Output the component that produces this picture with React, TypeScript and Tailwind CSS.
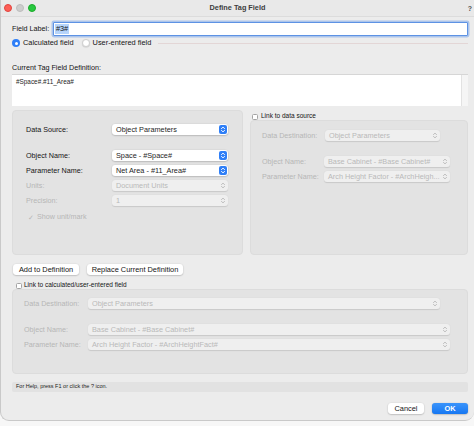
import React from 'react';

const Stepper = ({ disabled }: { disabled?: boolean }) =>
  disabled ? (
    <svg width="8" height="9" viewBox="0 0 8 9" className="shrink-0">
      <path d="M2.5 3.6 L4 2.1 L5.5 3.6 M2.5 5.4 L4 6.9 L5.5 5.4" fill="none" stroke="#b4b4b4" strokeWidth="0.9" strokeLinecap="round" strokeLinejoin="round" />
    </svg>
  ) : (
    <svg width="8" height="9" viewBox="0 0 8 9" className="shrink-0">
      <rect x="0" y="0" width="8" height="9" rx="2" fill="#2f7ff7" />
      <path d="M2.5 3.6 L4 2.1 L5.5 3.6 M2.5 5.4 L4 6.9 L5.5 5.4" fill="none" stroke="#fff" strokeWidth="1" strokeLinecap="round" strokeLinejoin="round" />
    </svg>
  );

const Popup = ({ text, width, disabled }: { text: string; width: string; disabled?: boolean }) => (
  <div
    className={`flex items-center justify-between h-[11px] rounded-[3px] pl-[4px] pr-[1px] text-[7.3px] leading-none whitespace-nowrap overflow-hidden ${width} ${
      disabled
        ? 'bg-[#efefef] text-[#b9b9b9] shadow-[0_0.5px_1px_rgba(0,0,0,0.12)]'
        : 'bg-white text-[#1e1e1e] shadow-[0_0.5px_1.5px_rgba(0,0,0,0.3)]'
    }`}
  >
    <span>{text}</span>
    <Stepper disabled={disabled} />
  </div>
);

const Row = ({ label, labelW, children, disabled, className = '' }: { label: string; labelW: string; children: React.ReactNode; disabled?: boolean; className?: string }) => (
  <div className={`flex items-center h-[11px] ${className}`}>
    <span className={`${labelW} shrink-0 whitespace-nowrap text-[7.2px] leading-none ${disabled ? 'text-[#b6b6b6]' : 'text-[#141414]'}`}>{label}</span>
    {children}
  </div>
);

const Checkbox = () => (
  <span className="w-[6px] h-[6px] shrink-0 rounded-[1.5px] bg-white border border-[#a4a4a4]" />
);

const Button = ({ text, width }: { text: string; width: string }) => (
  <div className={`h-[11px] ${width} flex items-center justify-center whitespace-nowrap rounded-[3px] bg-white text-[7.4px] leading-none text-[#141414] shadow-[0_0.5px_1.5px_rgba(0,0,0,0.3)]`}>
    {text}
  </div>
);

export default function App() {
  return (
    <div className="w-[474px] h-[426px] bg-[#f7f7f7] overflow-hidden font-['Liberation_Sans',Arial,sans-serif]">
      <div className="h-[421px] bg-[#ececec] border-l border-b border-[#c9c9c9] rounded-b-[9px] flex flex-col">
        {/* title bar */}
        <div className="grid grid-cols-[1fr_auto_1fr] items-center h-[17px] border-b border-[#dcdcdc] bg-[#e9e9e9]">
          <div className="flex items-center gap-[4px] pl-[3px]">
            <span className="w-[8px] h-[8px] rounded-full bg-[#fe5f57] border-[0.5px] border-[#e0443e]" />
            <span className="w-[8px] h-[8px] rounded-full bg-[#cdcdcd] border-[0.5px] border-[#bdbdbd]" />
            <span className="w-[8px] h-[8px] rounded-full bg-[#28c840] border-[0.5px] border-[#1aab29]" />
          </div>
          <span className="text-[7.3px] font-bold text-[#3d3d3d] leading-none">Define Tag Field</span>
          <span className="justify-self-end pr-[2px] text-[7px] font-bold text-[#555] leading-none">?</span>
        </div>

        <div className="flex flex-col pl-[11px] pr-[6px]">
          {/* field label */}
          <div className="flex items-center gap-[2px] h-[14px] mt-[5px]">
            <span className="w-[39px] shrink-0 whitespace-nowrap text-[7.2px] leading-none text-[#141414]">Field Label:</span>
            <div className="flex-1 h-[14px] flex items-center bg-white border border-[#5d92e4] rounded-[1px] shadow-[0_0_0_1.5px_rgba(120,165,235,0.55)]">
              <span className="ml-[1px] px-[1px] bg-[#b6d4fb] text-[7.3px] leading-[10px] text-[#141414]">#3#</span>
            </div>
          </div>

          {/* radios */}
          <div className="flex items-center h-[10px] mt-[2px] whitespace-nowrap">
            <span className="w-[8px] h-[8px] rounded-full bg-[#2f7ff7] flex items-center justify-center">
              <span className="w-[3px] h-[3px] rounded-full bg-white" />
            </span>
            <span className="ml-[3px] text-[7.4px] leading-none text-[#141414]">Calculated field</span>
            <span className="ml-[8px] w-[8px] h-[8px] rounded-full bg-white border-[0.5px] border-[#cfcfcf] shadow-[0_0.5px_1px_rgba(0,0,0,0.15)]" />
            <span className="ml-[3px] text-[7.4px] leading-none text-[#141414]">User-entered field</span>
            <span className="flex-1 ml-[7px] h-px bg-[#e3d6d6]" />
          </div>

          {/* definition */}
          <span className="mt-[15px] h-[9px] text-[7.2px] leading-[9px] text-[#141414]">Current Tag Field Definition:</span>
          <div className="mt-[2px] h-[32px] flex bg-white border-t border-[#d6d6d6]">
            <span className="flex-1 pl-[4px] pt-[4px] text-[6.4px] leading-none text-[#262626]">#Space#.#11_Area#</span>
            <span className="w-[7px] bg-[#f5f5f5] border-l border-[#e2e2e2]" />
          </div>

          {/* panels */}
          <div className="flex gap-[7px] mt-[4px] h-[145px]">
            <div className="w-[231px] bg-[#e3e3e3] border border-[#dcdcdc] rounded-[4px] flex flex-col pl-[13px] pt-[13px]">
              <Row label="Data Source:" labelW="w-[86px]">
                <Popup text="Object Parameters" width="w-[116px]" />
              </Row>
              <Row label="Object Name:" labelW="w-[86px]" className="mt-[15px]">
                <Popup text="Space - #Space#" width="w-[116px]" />
              </Row>
              <Row label="Parameter Name:" labelW="w-[86px]" className="mt-[4px]">
                <Popup text="Net Area - #11_Area#" width="w-[116px]" />
              </Row>
              <Row label="Units:" labelW="w-[86px]" className="mt-[4px]" disabled>
                <Popup text="Document Units" width="w-[116px]" disabled />
              </Row>
              <Row label="Precision:" labelW="w-[86px]" className="mt-[4px]" disabled>
                <Popup text="1" width="w-[116px]" disabled />
              </Row>
              <div className="flex items-center h-[10px] mt-[6px] pl-[2px]">
                <span className="text-[7px] leading-none text-[#b6b6b6]">✓</span>
                <span className="ml-[3px] text-[7.2px] leading-none text-[#b6b6b6]">Show unit/mark</span>
              </div>
            </div>

            <div className="flex-1 flex flex-col">
              <div className="flex items-end h-[10px] pl-[2px] gap-[3px]">
                <Checkbox />
                <span className="text-[6.5px] leading-[8px] text-[#141414]">Link to data source</span>
              </div>
              <div className="flex-1 bg-[#e3e3e3] border border-[#dcdcdc] rounded-[4px] flex flex-col pl-[11px] pt-[9px]">
                <Row label="Data Destination:" labelW="w-[63px]" disabled>
                  <Popup text="Object Parameters" width="w-[115px]" disabled />
                </Row>
                <Row label="Object Name:" labelW="w-[62px]" className="mt-[15px]" disabled>
                  <Popup text="Base Cabinet - #Base Cabinet#" width="w-[126px]" disabled />
                </Row>
                <Row label="Parameter Name:" labelW="w-[62px]" className="mt-[4px]" disabled>
                  <Popup text="Arch Height Factor - #ArchHeigh..." width="w-[126px]" disabled />
                </Row>
              </div>
            </div>
          </div>

          {/* action buttons */}
          <div className="flex gap-[8px] mt-[9px] pl-[1px]">
            <Button text="Add to Definition" width="w-[66px]" />
            <Button text="Replace Current Definition" width="w-[96px]" />
          </div>

          {/* link to calculated */}
          <div className="flex items-end h-[8px] mt-[6px] pl-[4px] gap-[2px]">
            <Checkbox />
            <span className="text-[6.5px] leading-[8px] text-[#141414]">Link to calculated/user-entered field</span>
          </div>
          <div className="h-[85px] bg-[#e3e3e3] border border-[#dcdcdc] rounded-[4px] flex flex-col pl-[11px] pt-[8px]">
            <Row label="Data Destination:" labelW="w-[64px]" disabled>
              <Popup text="Object Parameters" width="w-[352px]" disabled />
            </Row>
            <Row label="Object Name:" labelW="w-[64px]" className="mt-[15px]" disabled>
              <Popup text="Base Cabinet - #Base Cabinet#" width="w-[362px]" disabled />
            </Row>
            <Row label="Parameter Name:" labelW="w-[64px]" className="mt-[4px]" disabled>
              <Popup text="Arch Height Factor - #ArchHeightFact#" width="w-[362px]" disabled />
            </Row>
          </div>

          {/* help */}
          <div className="mt-[8px] h-[10px] flex items-center pl-[4px] bg-[#e2e2e2] rounded-[2px]">
            <span className="text-[5.5px] leading-none text-[#222]">For Help, press F1 or click the ? icon.</span>
          </div>

          {/* footer */}
          <div className="flex justify-end gap-[8px] mt-[11px]">
            <Button text="Cancel" width="w-[36px]" />
            <div className="h-[11px] w-[36px] flex items-center justify-center rounded-[3px] bg-[#1d83f8] bg-gradient-to-b from-[#3a94fb] to-[#1577f2] text-[7.4px] font-bold leading-none text-white shadow-[0_0.5px_1.5px_rgba(0,0,0,0.3)]">
              OK
            </div>
          </div>
        </div>
      </div>
    </div>
  );
}
